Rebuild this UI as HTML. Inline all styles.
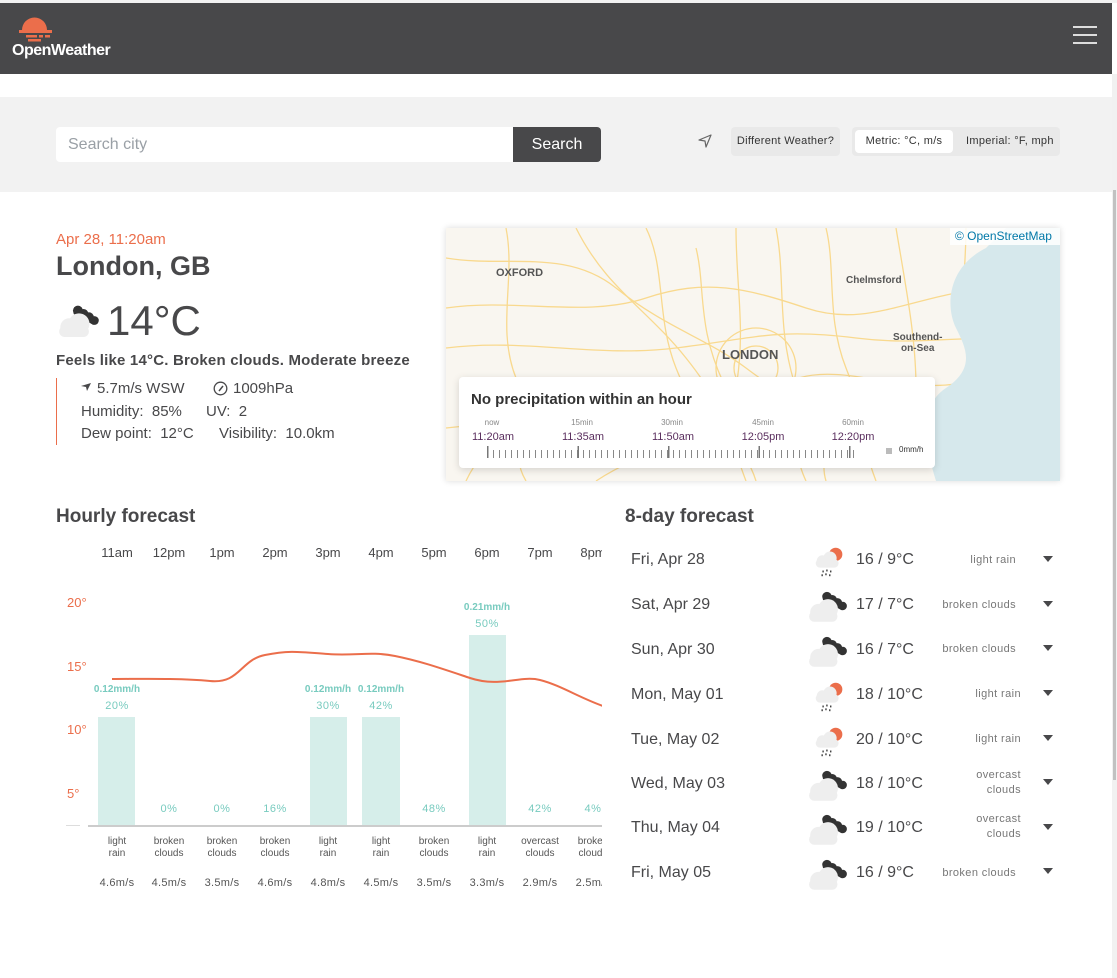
<!DOCTYPE html>
<html><head><meta charset="utf-8"><style>
*{margin:0;padding:0;box-sizing:border-box}
body{width:1117px;height:978px;position:relative;overflow:hidden;background:#fff;font-family:"Liberation Sans",sans-serif;color:#48484a}
.a{position:absolute;white-space:nowrap}
.c{transform:translateX(-50%);text-align:center}
</style></head><body>
<svg width="0" height="0" style="position:absolute">
<defs>
<symbol id="bc" viewBox="0 0 40 30"><g fill="#333"><circle cx="19" cy="6" r="4.5"/><circle cx="24" cy="9" r="4.5"/><circle cx="29" cy="12" r="4.5"/><circle cx="34" cy="15" r="4"/><path d="M17 4L36 13 33 19 15 9z"/></g><g fill="#eee"><circle cx="11" cy="21" r="8"/><circle cx="20" cy="18" r="9.5"/><rect x="2" y="20" width="27" height="10" rx="5"/></g></symbol>
<symbol id="lr" viewBox="0 0 40 34"><circle cx="26" cy="10" r="7" fill="#eb6e4b"/><g fill="#eee"><circle cx="12" cy="17" r="6"/><circle cx="20" cy="14" r="7"/><rect x="5" y="15" width="24" height="9" rx="4.5"/></g><g fill="#444"><rect x="12" y="27" width="1.5" height="2"/><rect x="16" y="26" width="1.5" height="2"/><rect x="20" y="27" width="1.5" height="2"/><rect x="11" y="31" width="1.5" height="2"/><rect x="15" y="30" width="1.5" height="2"/><rect x="19" y="31" width="1.5" height="2"/></g></symbol>
</defs></svg>

<div class="a" style="left:0;top:0;width:1117px;height:3px;background:#f2f2f2"></div>
<div class="a" style="left:0;top:3px;width:1112px;height:71px;background:#48484a"></div>
<svg class="a" style="left:17px;top:14px" width="38" height="30" viewBox="0 0 38 30"><path d="M5 16a12.5 12.5 0 0 1 25 0z" fill="#eb6e4b"/><rect x="2" y="16" width="33" height="3" fill="#eb6e4b"/><rect x="9" y="21" width="11" height="2.5" fill="#eb6e4b"/><rect x="22" y="21" width="4" height="2.5" fill="#eb6e4b"/><rect x="28" y="21" width="5" height="2.5" fill="#eb6e4b"/><rect x="11" y="25" width="13" height="2.5" fill="#eb6e4b"/></svg>
<div class="a" style="left:12px;top:42px;color:#fff;font-size:16px;font-weight:bold;letter-spacing:-0.5px">OpenWeather</div>
<div class="a" style="left:1073px;top:26px;width:24px;height:2px;background:#ddd;box-shadow:0 8px 0 #ddd,0 16px 0 #ddd"></div>
<div class="a" style="left:1112px;top:74px;width:5px;height:904px;background:#f1f1f1"></div>
<div class="a" style="left:1113px;top:190px;width:3px;height:590px;background:#c1c1c1"></div>

<div class="a" style="left:0;top:97px;width:1112px;height:95px;background:#f2f2f2"></div>
<div class="a" style="left:56px;top:127px;width:460px;height:35px;background:#fff;border-radius:4px 0 0 4px"></div>
<div class="a" style="left:68px;top:136px;font-size:16px;color:#9aa0a6">Search city</div>
<div class="a" style="left:513px;top:127px;width:88px;height:35px;background:#48484a;border-radius:0 4px 4px 0;color:#fff;font-size:16px;text-align:center;line-height:35px">Search</div>
<svg class="a" style="left:697px;top:133px" width="16" height="16" viewBox="0 0 16 16"><path d="M14 2L2 7l6 1 1 6z" fill="none" stroke="#666" stroke-width="1.2" stroke-linejoin="round"/></svg>
<div class="a" style="left:731px;top:127px;width:109px;height:29px;background:#e9e9e9;border-radius:4px;font-size:11px;line-height:29px;text-align:center;color:#333;letter-spacing:0.3px">Different Weather?</div>
<div class="a" style="left:852px;top:127px;width:208px;height:29px;background:#e9e9e9;border-radius:4px"></div>
<div class="a" style="left:855px;top:130px;width:98px;height:23px;background:#fff;border-radius:4px;font-size:11px;line-height:23px;text-align:center;color:#333;letter-spacing:0.3px">Metric: °C, m/s</div>
<div class="a" style="left:966px;top:135px;font-size:11px;color:#333;letter-spacing:0.3px">Imperial: °F, mph</div>

<div class="a" style="left:56px;top:231px;color:#eb6e4b;font-size:15px">Apr 28, 11:20am</div>
<div class="a" style="left:56px;top:251px;font-size:27px;font-weight:bold;color:#48484a">London, GB</div>
<svg class="a" style="left:57px;top:304px" width="44" height="33"><use href="#bc"/></svg>
<div class="a" style="left:107px;top:297px;font-size:42px;color:#48484a">14°C</div>
<div class="a" style="left:56px;top:352px;font-size:15px;font-weight:bold;color:#48484a;letter-spacing:0.2px">Feels like 14°C. Broken clouds. Moderate breeze</div>
<div class="a" style="left:56px;top:378px;width:1px;height:67px;background:#eb6e4b"></div>
<svg class="a" style="left:80px;top:382px" width="12" height="10"><path d="M1 4L11 1 7 9 6 5z" fill="#48484a"/></svg>
<div class="a" style="left:97px;top:380px;font-size:15px">5.7m/s WSW</div>
<svg class="a" style="left:213px;top:381px" width="15" height="15"><circle cx="7.5" cy="7.5" r="6.3" fill="none" stroke="#48484a" stroke-width="1.3"/><path d="M10 5L6 10" stroke="#48484a" stroke-width="1.5"/></svg>
<div class="a" style="left:233px;top:380px;font-size:15px">1009hPa</div>
<div class="a" style="left:81px;top:403px;font-size:15px">Humidity:&nbsp; 85%</div>
<div class="a" style="left:206px;top:403px;font-size:15px">UV:&nbsp; 2</div>
<div class="a" style="left:81px;top:425px;font-size:15px">Dew point:&nbsp; 12°C</div>
<div class="a" style="left:219px;top:425px;font-size:15px">Visibility:&nbsp; 10.0km</div>

<!-- map -->
<div class="a" style="left:446px;top:228px;width:614px;height:253px;background:#f9f6f0;overflow:hidden;box-shadow:0 0 6px rgba(0,0,0,.15)">
<svg width="614" height="253" style="position:absolute;left:0;top:0" fill="none" stroke="#f9d98e" stroke-width="1.3">
<path d="M0 30C60 40 120 20 170 60S260 110 300 140 360 180 420 190"/>
<path d="M60 0C70 50 50 100 70 150S60 220 80 253"/>
<path d="M0 120C80 110 150 130 230 120S330 100 410 110 520 100 614 120"/>
<path d="M130 0C160 60 200 80 240 130S280 200 300 253"/>
<path d="M200 0C220 40 210 90 230 140S260 190 290 220"/>
<path d="M250 20C260 60 250 100 280 160"/>
<path d="M290 0C290 60 300 100 290 160S300 220 310 253"/>
<path d="M330 0C340 50 330 100 350 160S340 210 360 253"/>
<path d="M380 0C390 40 380 90 400 140S410 200 430 253"/>
<path d="M450 0C460 60 470 110 470 160S480 210 500 253"/>
<path d="M520 0C520 50 510 90 530 140S520 200 540 253"/>
<path d="M0 200C80 190 160 210 240 190S340 170 420 180 520 170 560 190"/>
<path d="M0 80C70 70 140 90 200 70S300 60 360 80 460 70 540 60"/>
<path d="M150 253C200 220 260 210 300 180S360 140 420 150 500 160 540 150"/>
<path d="M20 253C40 210 80 190 120 170S180 150 220 160"/>
<path d="M380 253C370 220 400 200 390 170"/>
<circle cx="310" cy="140" r="40"/><circle cx="310" cy="140" r="22"/>
</svg>
<svg width="614" height="253" style="position:absolute;left:0;top:0"><path d="M614 0L614 253 490 253C480 220 470 180 500 160S520 120 510 100 500 40 540 20L560 0z" fill="#d6e8ec"/></svg>
<div class="a" style="left:50px;top:39px;font-size:11px;font-weight:bold;color:#555">OXFORD</div>
<div class="a" style="left:400px;top:47px;font-size:10px;font-weight:bold;color:#555">Chelmsford</div>
<div class="a" style="left:447px;top:104px;font-size:10px;font-weight:bold;color:#555;text-align:center;line-height:11px">Southend-<br>on-Sea</div>
<div class="a" style="left:276px;top:119px;font-size:13px;font-weight:bold;color:#555">LONDON</div>
<div class="a" style="left:504px;top:0;width:110px;height:17px;background:rgba(255,255,255,.85);color:#0078a8;font-size:12px;line-height:17px;padding-left:5px">© OpenStreetMap</div>
</div>
<div class="a" style="left:459px;top:377px;width:476px;height:91px;background:#fff;border-radius:4px;box-shadow:0 2px 8px rgba(0,0,0,.15)"></div>
<div class="a" style="left:471px;top:391px;font-size:15px;font-weight:bold;color:#333">No precipitation within an hour</div>
<div class="a c" style="left:492px;top:418px;font-size:8px;color:#888">now</div>
<div class="a c" style="left:582px;top:418px;font-size:8px;color:#888">15min</div>
<div class="a c" style="left:672px;top:418px;font-size:8px;color:#888">30min</div>
<div class="a c" style="left:763px;top:418px;font-size:8px;color:#888">45min</div>
<div class="a c" style="left:853px;top:418px;font-size:8px;color:#888">60min</div>
<div class="a c" style="left:493px;top:431px;font-size:11px;color:#5a2e5e">11:20am</div>
<div class="a c" style="left:583px;top:431px;font-size:11px;color:#5a2e5e">11:35am</div>
<div class="a c" style="left:673px;top:431px;font-size:11px;color:#5a2e5e">11:50am</div>
<div class="a c" style="left:763px;top:431px;font-size:11px;color:#5a2e5e">12:05pm</div>
<div class="a c" style="left:853px;top:431px;font-size:11px;color:#5a2e5e">12:20pm</div>
<div class="a" style="left:487px;top:446px;width:372px;height:12px;background:repeating-linear-gradient(90deg,#888 0 1px,transparent 1px 6px);clip-path:inset(4px 0 0 0)"></div>
<div class="a" style="left:487px;top:446px;width:373px;height:12px;background:repeating-linear-gradient(90deg,#777 0 1.5px,transparent 1.5px 90.5px)"></div>
<div class="a" style="left:886px;top:448px;width:6px;height:6px;background:#bbb"></div>
<div class="a" style="left:899px;top:445px;font-size:8px;color:#333">0mm/h</div>

<!-- hourly -->
<div class="a" style="left:56px;top:506px;font-size:19px;font-weight:bold;color:#48484a">Hourly forecast</div>
<div class="a" style="left:56px;top:540px;width:546px;height:360px;overflow:hidden">
<div style="position:relative;left:-56px;top:-540px;width:700px;height:978px">
<div class="a c" style="left:117px;top:545px;font-size:13px">11am</div>
<div class="a c" style="left:169px;top:545px;font-size:13px">12pm</div>
<div class="a c" style="left:222px;top:545px;font-size:13px">1pm</div>
<div class="a c" style="left:275px;top:545px;font-size:13px">2pm</div>
<div class="a c" style="left:328px;top:545px;font-size:13px">3pm</div>
<div class="a c" style="left:381px;top:545px;font-size:13px">4pm</div>
<div class="a c" style="left:434px;top:545px;font-size:13px">5pm</div>
<div class="a c" style="left:487px;top:545px;font-size:13px">6pm</div>
<div class="a c" style="left:540px;top:545px;font-size:13px">7pm</div>
<div class="a c" style="left:593px;top:545px;font-size:13px">8pm</div>
<div class="a" style="left:67px;top:595px;font-size:13px;color:#eb6e4b">20°</div>
<div class="a" style="left:67px;top:659px;font-size:13px;color:#eb6e4b">15°</div>
<div class="a" style="left:67px;top:722px;font-size:13px;color:#eb6e4b">10°</div>
<div class="a" style="left:67px;top:786px;font-size:13px;color:#eb6e4b">5°</div>
<div class="a" style="left:98px;top:717px;width:37px;height:108px;background:#d6eeea"></div>
<div class="a" style="left:310px;top:717px;width:37px;height:108px;background:#d6eeea"></div>
<div class="a" style="left:362px;top:717px;width:38px;height:108px;background:#d6eeea"></div>
<div class="a" style="left:469px;top:635px;width:37px;height:190px;background:#d6eeea"></div>
<div class="a" style="left:66px;top:825px;width:14px;height:1px;background:#ddd"></div>
<div class="a" style="left:88px;top:825px;width:520px;height:1.5px;background:#ccc"></div>
<svg class="a" style="left:0;top:0" width="700" height="900"><path d="M112 679C140 679 180 678 210 681S240 660 265 655S300 652 328 654S370 651 395 656S440 668 470 678S520 675 540 680S580 698 603 706" fill="none" stroke="#eb6e4b" stroke-width="2"/></svg>
<div style="font-size:10px;font-weight:bold;color:#78cbbf">
<div class="a c" style="left:117px;top:684px">0.12mm/h</div>
<div class="a c" style="left:328px;top:684px">0.12mm/h</div>
<div class="a c" style="left:381px;top:684px">0.12mm/h</div>
<div class="a c" style="left:487px;top:602px">0.21mm/h</div>
</div>
<div style="font-size:11px;color:#78cbbf;letter-spacing:0.5px">
<div class="a c" style="left:117px;top:700px">20%</div>
<div class="a c" style="left:169px;top:803px">0%</div>
<div class="a c" style="left:222px;top:803px">0%</div>
<div class="a c" style="left:275px;top:803px">16%</div>
<div class="a c" style="left:328px;top:700px">30%</div>
<div class="a c" style="left:381px;top:700px">42%</div>
<div class="a c" style="left:434px;top:803px">48%</div>
<div class="a c" style="left:487px;top:618px">50%</div>
<div class="a c" style="left:540px;top:803px">42%</div>
<div class="a c" style="left:593px;top:803px">4%</div>
</div>
<div style="font-size:10px;color:#555;line-height:12px">
<div class="a c" style="left:117px;top:836px">light<br>rain</div>
<div class="a c" style="left:169px;top:836px">broken<br>clouds</div>
<div class="a c" style="left:222px;top:836px">broken<br>clouds</div>
<div class="a c" style="left:275px;top:836px">broken<br>clouds</div>
<div class="a c" style="left:328px;top:836px">light<br>rain</div>
<div class="a c" style="left:381px;top:836px">light<br>rain</div>
<div class="a c" style="left:434px;top:836px">broken<br>clouds</div>
<div class="a c" style="left:487px;top:836px">light<br>rain</div>
<div class="a c" style="left:540px;top:836px">overcast<br>clouds</div>
<div class="a c" style="left:593px;top:836px">broken<br>clouds</div>
</div>
<div style="font-size:11px;color:#555;letter-spacing:0.3px">
<div class="a c" style="left:117px;top:877px">4.6m/s</div>
<div class="a c" style="left:169px;top:877px">4.5m/s</div>
<div class="a c" style="left:222px;top:877px">3.5m/s</div>
<div class="a c" style="left:275px;top:877px">4.6m/s</div>
<div class="a c" style="left:328px;top:877px">4.8m/s</div>
<div class="a c" style="left:381px;top:877px">4.5m/s</div>
<div class="a c" style="left:434px;top:877px">3.5m/s</div>
<div class="a c" style="left:487px;top:877px">3.3m/s</div>
<div class="a c" style="left:540px;top:877px">2.9m/s</div>
<div class="a c" style="left:593px;top:877px">2.5m/s</div>
</div>
</div></div>

<!-- daily -->
<div class="a" style="left:625px;top:506px;font-size:19px;font-weight:bold;color:#48484a">8-day forecast</div>
<div style="font-size:16px;color:#48484a">
<div class="a" style="left:631px;top:551px">Fri, Apr 28</div>
<div class="a" style="left:631px;top:596px">Sat, Apr 29</div>
<div class="a" style="left:631px;top:641px">Sun, Apr 30</div>
<div class="a" style="left:631px;top:686px">Mon, May 01</div>
<div class="a" style="left:631px;top:731px">Tue, May 02</div>
<div class="a" style="left:631px;top:775px">Wed, May 03</div>
<div class="a" style="left:631px;top:819px">Thu, May 04</div>
<div class="a" style="left:631px;top:864px">Fri, May 05</div>
<div class="a" style="left:856px;top:551px">16 / 9°C</div>
<div class="a" style="left:856px;top:596px">17 / 7°C</div>
<div class="a" style="left:856px;top:641px">16 / 7°C</div>
<div class="a" style="left:856px;top:686px">18 / 10°C</div>
<div class="a" style="left:856px;top:731px">20 / 10°C</div>
<div class="a" style="left:856px;top:775px">18 / 10°C</div>
<div class="a" style="left:856px;top:819px">19 / 10°C</div>
<div class="a" style="left:856px;top:864px">16 / 9°C</div>
</div>
<svg class="a" style="left:811px;top:544px" width="38" height="34"><use href="#lr"/></svg>
<svg class="a" style="left:807px;top:590px" width="42" height="32"><use href="#bc"/></svg>
<svg class="a" style="left:807px;top:635px" width="42" height="32"><use href="#bc"/></svg>
<svg class="a" style="left:811px;top:679px" width="38" height="34"><use href="#lr"/></svg>
<svg class="a" style="left:811px;top:724px" width="38" height="34"><use href="#lr"/></svg>
<svg class="a" style="left:807px;top:769px" width="42" height="32"><use href="#bc"/></svg>
<svg class="a" style="left:807px;top:813px" width="42" height="32"><use href="#bc"/></svg>
<svg class="a" style="left:807px;top:858px" width="42" height="32"><use href="#bc"/></svg>
<div style="font-size:11px;color:#777;text-align:right;line-height:15px;letter-spacing:0.4px">
<div class="a" style="right:101px;top:553px">light rain</div>
<div class="a" style="right:101px;top:598px">broken clouds</div>
<div class="a" style="right:101px;top:642px">broken clouds</div>
<div class="a" style="right:96px;top:687px">light rain</div>
<div class="a" style="right:96px;top:732px">light rain</div>
<div class="a" style="right:96px;top:768px">overcast<br>clouds</div>
<div class="a" style="right:96px;top:812px">overcast<br>clouds</div>
<div class="a" style="right:101px;top:866px">broken clouds</div>
</div>
<svg class="a" style="left:1043px;top:556px" width="10" height="320" fill="#48484a"><path d="M0 0h10l-5 6z"/><path d="M0 45h10l-5 6z"/><path d="M0 89h10l-5 6z"/><path d="M0 134h10l-5 6z"/><path d="M0 179h10l-5 6z"/><path d="M0 223h10l-5 6z"/><path d="M0 268h10l-5 6z"/><path d="M0 312h10l-5 6z"/></svg>
</body></html>
